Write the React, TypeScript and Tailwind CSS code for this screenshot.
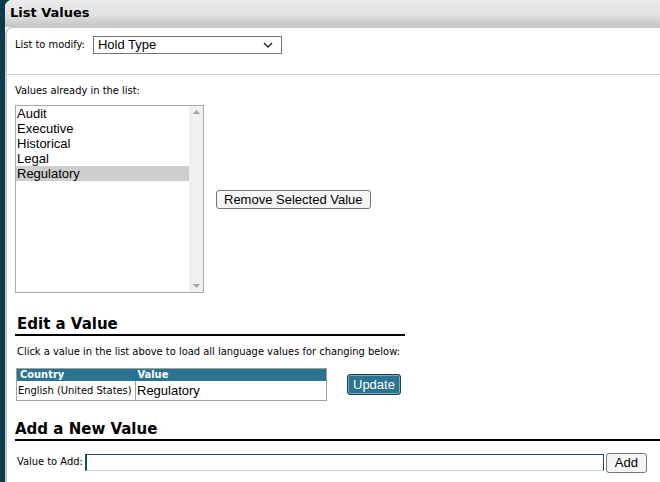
import React from 'react';

const verdana = { fontFamily: '"DejaVu Sans Condensed", "DejaVu Sans", Verdana, sans-serif' };
const heading = { fontFamily: '"DejaVu Sans", Verdana, sans-serif' };
const arial = { fontFamily: '"Liberation Sans", Arial, sans-serif' };

const values = ['Audit', 'Executive', 'Historical', 'Legal', 'Regulatory'];

const SectionTitle = ({ children, className = '' }: { children: React.ReactNode; className?: string }) => (
  <div className={`border-b-2 border-black pb-[1px] text-[15px] font-bold leading-[18px] text-black ${className}`} style={heading}>
    {children}
  </div>
);

export default function App() {
  const selected = 'Regulatory';

  return (
    <div className="flex h-[482px] w-[660px] overflow-hidden bg-[#0e3a4d]">
      <div className="w-[5px] shrink-0" />
      <div className="flex flex-1 flex-col overflow-hidden rounded-tl-[7px] bg-white">
        {/* panel header */}
        <div className="h-[27px] shrink-0 bg-gradient-to-b from-[#ececec] via-[#e3e3e3] to-[#c4c4c4] pl-[5px] pt-[5px] text-[13px] font-bold leading-[16px] text-black" style={heading}>
          List Values
        </div>

        <div className="flex-1 rounded-tl-[7px] border-l-2 border-t border-[#c8c8c8] bg-white pt-[8px]">
          {/* list picker */}
          <div className="flex items-center gap-[8px] pl-[8px] text-[11px]" style={verdana}>
            <span>List to modify:</span>
            <div className="flex h-[18px] w-[189px] items-center justify-between border border-[#767676] bg-white pl-[4px] pr-[8px] text-[13px]" style={arial}>
              <span>Hold Type</span>
              <svg width="10" height="6" viewBox="0 0 10 6" fill="none" stroke="#222" strokeWidth="1.4">
                <path d="M1 1l4 4 4-4" />
              </svg>
            </div>
          </div>

          <div className="mt-[20px] border-t border-[#cccccc]" />

          <div className="mt-[9px] pl-[8px] text-[11px] leading-[14px]" style={verdana}>
            Values already in the list:
          </div>

          {/* list box + remove button */}
          <div className="mt-[7px] flex items-center gap-[12px] pl-[8px]">
            <div className="flex h-[188px] w-[189px] border border-[#a9a9a9] bg-white">
              <div className="flex-1 text-[13px] leading-[15px]" style={arial}>
                {values.map(v => (
                  <div key={v} className={`pl-[1px] ${v === selected ? 'bg-[#cecece]' : ''}`}>{v}</div>
                ))}
              </div>
              <div className="flex w-[14px] flex-col items-center justify-between bg-[#f0f0f0] py-[4px]">
                <svg width="7" height="4" viewBox="0 0 7 4"><path d="M0 4L3.5 0 7 4z" fill="#a3a3a3" /></svg>
                <svg width="7" height="4" viewBox="0 0 7 4"><path d="M0 0L3.5 4 7 0z" fill="#a3a3a3" /></svg>
              </div>
            </div>
            <button className="h-[19px] rounded-[3px] border border-[#767676] bg-[#f5f5f5] px-[7px] text-[13px] leading-[15px] text-black" style={arial}>
              Remove Selected Value
            </button>
          </div>

          {/* edit a value */}
          <div className="mt-[22px] w-[390px] pl-[8px]">
            <SectionTitle className="w-[390px] pl-[2px]">Edit a Value</SectionTitle>
          </div>
          <div className="mt-[9px] whitespace-nowrap pl-[10px] text-[11px] leading-[14px]" style={verdana}>
            Click a value in the list above to load all language values for changing below:
          </div>

          <div className="mt-[9px] flex items-center gap-[20px] pl-[9px]">
            <table className="w-[311px] border-collapse border border-[#a0a0a0] text-[11px]" style={verdana}>
              <thead>
                <tr className="bg-[#2a7391] text-left text-white">
                  <th className="w-[119px] px-[3px] py-0 leading-[12px]">Country</th>
                  <th className="px-[2px] py-0 leading-[12px]">Value</th>
                </tr>
              </thead>
              <tbody>
                <tr>
                  <td className="h-[19px] whitespace-nowrap border-r border-[#a0a0a0] pl-[1px] leading-[13px]">English (United States)</td>
                  <td className="pl-[1px] text-[13px] leading-[15px]" style={arial}>Regulatory</td>
                </tr>
              </tbody>
            </table>
            <button className="h-[21px] rounded-[3px] border border-[#1d3f4c] bg-[#2a7391] px-[5px] text-[13px] leading-[15px] text-white shadow-[inset_0_0_0_1px_#7fa9bb]" style={arial}>
              Update
            </button>
          </div>

          {/* add a new value */}
          <div className="mt-[19px] pl-[8px]">
            <SectionTitle>Add a New Value</SectionTitle>
          </div>
          <div className="mt-[12px] flex items-center pl-[10px] text-[11px]" style={verdana}>
            <span>Value to Add:</span>
            <div className="ml-[2px] h-[17px] w-[519px] border-b border-l-2 border-r border-t border-b-[#c8cdd1] border-l-[#1a4a5e] border-r-[#1a4a5e] border-t-[#1a4a5e] bg-white" />
            <button className="ml-[2px] h-[20px] rounded-[3px] border border-[#767676] bg-[#f5f5f5] px-[8px] text-[13px] leading-[15px] text-black" style={arial}>
              Add
            </button>
          </div>
        </div>
      </div>
    </div>
  );
}
